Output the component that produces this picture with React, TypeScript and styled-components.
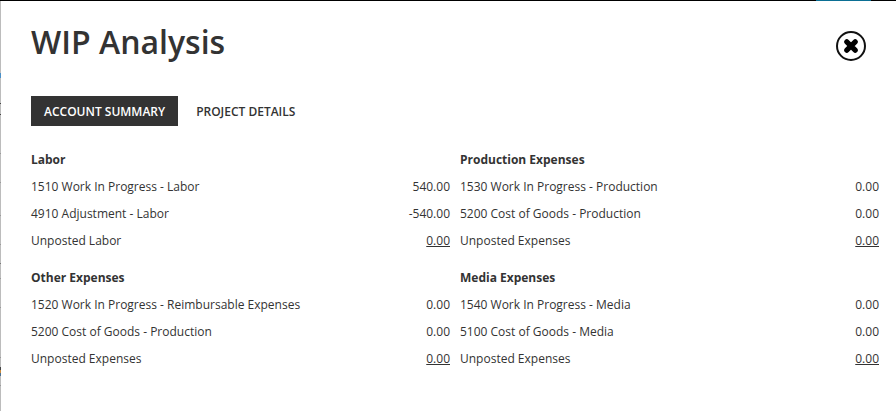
import React, { useState } from "react";
import styled, { createGlobalStyle } from "styled-components";

interface Line {
	label: string
	value: string
}

interface Section {
	title: string
	lines: Line[]
}

const sections: Section[] = [
	{
		title: "Labor",
		lines: [
			{ label: "1510 Work In Progress - Labor", value: "540.00" },
			{ label: "4910 Adjustment - Labor", value: "-540.00" },
			{ label: "Unposted Labor", value: "0.00" },
		],
	},
	{
		title: "Production Expenses",
		lines: [
			{ label: "1530 Work In Progress - Production", value: "0.00" },
			{ label: "5200 Cost of Goods - Production", value: "0.00" },
			{ label: "Unposted Expenses", value: "0.00" },
		],
	},
	{
		title: "Other Expenses",
		lines: [
			{ label: "1520 Work In Progress - Reimbursable Expenses", value: "0.00" },
			{ label: "5200 Cost of Goods - Production", value: "0.00" },
			{ label: "Unposted Expenses", value: "0.00" },
		],
	},
	{
		title: "Media Expenses",
		lines: [
			{ label: "1540 Work In Progress - Media", value: "0.00" },
			{ label: "5100 Cost of Goods - Media", value: "0.00" },
			{ label: "Unposted Expenses", value: "0.00" },
		],
	},
];

// bits of the page behind the modal that show through at the left edge
const edgeMarks = [
	{ top: 72, height: 5, color: "#4a90c8" },
	{ top: 102, height: 1, color: "#444" },
	{ top: 113, height: 1, color: "#444" },
	{ top: 152, height: 1, color: "#999" },
	{ top: 181, height: 1, color: "#999" },
	{ top: 214, height: 1, color: "#999" },
	{ top: 243, height: 1, color: "#999" },
	{ top: 262, height: 1, color: "#777" },
	{ top: 277, height: 1, color: "#999" },
	{ top: 306, height: 1, color: "#999" },
	{ top: 356, height: 1, color: "#999" },
	{ top: 366, height: 3, color: "#444" },
	{ top: 369, height: 3, color: "#c98a3c" },
	{ top: 372, height: 3, color: "#4a6f90" },
	{ top: 384, height: 1, color: "#999" },
];

const SummarySection: React.FC<{ section: Section }> = ({ section }) => {
	return (
		<div>
			<SectionTitle>{section.title}</SectionTitle>
			{section.lines.map((line, i) => (
				<Row key={line.label}>
					<span>{line.label}</span>
					<Amount $total={i === section.lines.length - 1}>{line.value}</Amount>
				</Row>
			))}
		</div>
	);
};

export default function App() {
	const [tab, setTab] = useState("summary");

	return (
		<>
			<GlobalStyle />
			<Modal>
				<TopAccent />
				{edgeMarks.map((mark) => (
					<EdgeMark key={mark.top} $top={mark.top} $height={mark.height} $color={mark.color} />
				))}
				<Header>
					<Title>WIP Analysis</Title>
					<CloseButton aria-label="Close">
						<svg width="14" height="14" viewBox="0 0 14 14">
							<path d="M2.8 2.8L11.2 11.2M11.2 2.8L2.8 11.2" stroke="#000" strokeWidth="5.2" strokeLinecap="round" fill="none" />
						</svg>
					</CloseButton>
				</Header>
				<Tabs>
					<Tab $active={tab === "summary"} onClick={() => setTab("summary")}>Account Summary</Tab>
					<Tab $active={tab === "details"} onClick={() => setTab("details")}>Project Details</Tab>
				</Tabs>
				<Grid>
					{sections.map((section) => (
						<SummarySection key={section.title} section={section} />
					))}
				</Grid>
			</Modal>
		</>
	);
}

const GlobalStyle = createGlobalStyle`
	html, body {
		margin: 0;
		padding: 0;
		background: #fff;
	}
	body {
		font-family: "Open Sans", "Liberation Sans", sans-serif;
		color: #333;
		overflow: hidden;
	}
`;

const Modal = styled.div`
	position: relative;
	box-sizing: border-box;
	width: 896px;
	height: 411px;
	padding: 0 17px 0 31px;
	background: #fff;
	border-top: 1px solid #000;
	box-shadow: inset 1px 0 0 #bcbcbc;
`;

const TopAccent = styled.div`
	position: absolute;
	top: -1px;
	left: 816px;
	width: 55px;
	height: 1px;
	background: #0b6f94;
`;

const EdgeMark = styled.div<{ $top: number; $height: number; $color: string }>`
	position: absolute;
	left: 0;
	top: ${(props) => props.$top}px;
	width: 1px;
	height: ${(props) => props.$height}px;
	background: ${(props) => props.$color};
`;

const Header = styled.div`
	display: flex;
	align-items: flex-start;
	justify-content: space-between;
	height: 95px;
`;

const Title = styled.h1`
	margin: 19px 0 0;
	font-size: 32px;
	line-height: 44px;
	font-weight: 600;
	color: #333;
`;

const CloseButton = styled.button`
	display: flex;
	align-items: center;
	justify-content: center;
	box-sizing: border-box;
	width: 30px;
	height: 30px;
	margin: 30px 13px 0 0;
	padding: 0;
	background: #fff;
	border: 2px solid #111;
	border-radius: 50%;
`;

const Tabs = styled.div`
	display: flex;
	height: 30px;
	margin-bottom: 20px;
`;

const Tab = styled.button<{ $active?: boolean }>`
	height: 30px;
	padding: 0 13px;
	border: 0;
	font-family: inherit;
	font-size: 12px;
	font-weight: 600;
	text-transform: uppercase;
	background: ${(props) => (props.$active ? "#333" : "transparent")};
	color: ${(props) => (props.$active ? "#fff" : "#333")};
	&:last-child {
		padding: 0 18px;
	}
`;

const Grid = styled.div`
	display: grid;
	grid-template-columns: 419px 419px;
	column-gap: 10px;
	row-gap: 10px;
`;

const SectionTitle = styled.div`
	height: 27px;
	line-height: 27px;
	font-size: 12px;
	font-weight: 700;
`;

const Row = styled.div`
	display: flex;
	justify-content: space-between;
	height: 27px;
	line-height: 27px;
	font-size: 12px;
`;

const Amount = styled.span<{ $total?: boolean }>`
	text-decoration: ${(props) => (props.$total ? "underline" : "none")};
`;
